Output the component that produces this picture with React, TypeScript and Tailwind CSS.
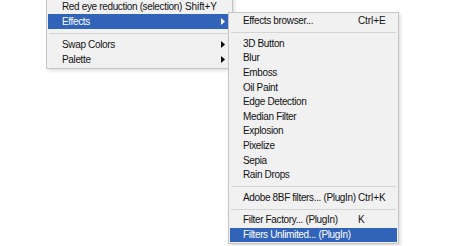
import React from 'react';

type Item =
  | { kind: 'sep' }
  | { kind: 'item'; label: string; shortcut?: string; arrow?: boolean; active?: boolean };

const mainItems: Item[] = [
  { kind: 'item', label: 'Red eye reduction (selection)', shortcut: 'Shift+Y' },
  { kind: 'item', label: 'Effects', arrow: true, active: true },
  { kind: 'sep' },
  { kind: 'item', label: 'Swap Colors', arrow: true },
  { kind: 'item', label: 'Palette', arrow: true },
];

const subItems: Item[] = [
  { kind: 'item', label: 'Effects browser...', shortcut: 'Ctrl+E' },
  { kind: 'sep' },
  { kind: 'item', label: '3D Button' },
  { kind: 'item', label: 'Blur' },
  { kind: 'item', label: 'Emboss' },
  { kind: 'item', label: 'Oil Paint' },
  { kind: 'item', label: 'Edge Detection' },
  { kind: 'item', label: 'Median Filter' },
  { kind: 'item', label: 'Explosion' },
  { kind: 'item', label: 'Pixelize' },
  { kind: 'item', label: 'Sepia' },
  { kind: 'item', label: 'Rain Drops' },
  { kind: 'sep' },
  { kind: 'item', label: 'Adobe 8BF filters... (PlugIn)', shortcut: 'Ctrl+K' },
  { kind: 'sep' },
  { kind: 'item', label: 'Filter Factory... (PlugIn)', shortcut: 'K' },
  { kind: 'item', label: 'Filters Unlimited... (PlugIn)', active: true },
];

const Arrow: React.FC<{ light?: boolean }> = ({ light }) => (
  <svg width="4" height="7" viewBox="0 0 4 7" className="ml-auto mr-[6px] shrink-0">
    <path d="M0 0 L4 3.5 L0 7 Z" fill={light ? '#ffffff' : '#000000'} />
  </svg>
);

const MenuRows: React.FC<{ items: Item[]; labelClass: string; rowClass: string }> = ({
  items,
  labelClass,
  rowClass,
}) => (
  <>
    {items.map((it, i) =>
      it.kind === 'sep' ? (
        <div key={i} className="h-[8px] flex items-center px-[1px]">
          <div className="w-full h-[1px] bg-[#d4d4d4]" />
        </div>
      ) : (
        <div
          key={i}
          className={`flex items-center whitespace-nowrap ${rowClass} ${
            it.active ? 'bg-[#3163b8] text-white' : 'text-[#111]'
          }`}
        >
          <span className={`shrink-0 ${labelClass}`}>{it.label}</span>
          {it.shortcut && <span className="tracking-[-0.1px]">{it.shortcut}</span>}
          {it.arrow && <Arrow light={it.active} />}
        </div>
      )
    )}
  </>
);

export default function App() {
  return (
    <div
      className="w-[474px] h-[246px] bg-white overflow-hidden text-[10px] leading-none tracking-[-0.35px] flex items-start"
      style={{ fontFamily: '"Liberation Sans", Arial, sans-serif' }}
    >
      {/* main menu */}
      <div className="ml-[46px] mt-[-3px] w-[187px] shrink-0 bg-[#f1f1f1] border border-[#c4c4c4] p-[1px] shadow-[2px_2px_3px_rgba(0,0,0,0.12)]">
        <MenuRows items={mainItems} labelClass="w-[123px]" rowClass="h-[15px] pl-[14px]" />
      </div>

      {/* effects submenu */}
      <div className="relative ml-[-5px] mt-[12px] w-[171px] shrink-0 bg-[#f1f1f1] border border-[#c4c4c4] p-[1px] shadow-[2px_2px_3px_rgba(0,0,0,0.12)]">
        <MenuRows items={subItems} labelClass="w-[115px]" rowClass="h-[14.6px] pl-[13px]" />
      </div>
    </div>
  );
}
